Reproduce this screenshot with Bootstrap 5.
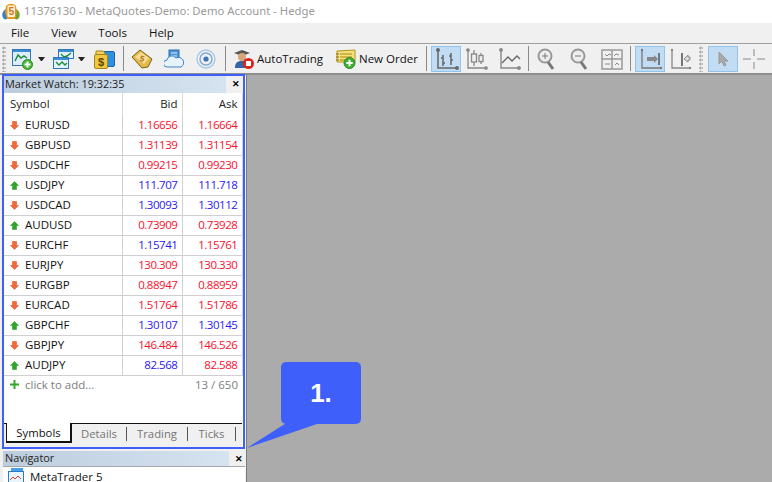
<!DOCTYPE html>
<html lang="en"><head><meta charset="utf-8"><title>MetaTrader 5</title>
<link rel="stylesheet" href="https://cdn.jsdelivr.net/npm/bootstrap@5.3.0/dist/css/bootstrap.min.css">
<style>
html,body{width:772px;height:482px;overflow:hidden;background:#fff}
body{font-family:"Open Sans","Noto Sans",sans-serif;font-size:12px;color:#111;position:relative}
.titlebar{height:23px;padding-left:2px;gap:4px;background:#fff;color:#9a9a9a;font-size:11.3px;font-family:"Noto Sans","Open Sans",sans-serif}
.menubar{height:20px;background:#f0f0f0;padding-left:11px;font-size:11.5px;color:#111}
.menubar span{margin-right:22px}
.toolbar{height:32px;background:#f0f0f0;border-top:1px solid #a0a0a0;border-bottom:2px solid #8e8e8e;flex:none}
.grip{width:4px;height:26px;margin-left:2px;background-image:radial-gradient(#a8a8a8 1px,transparent 1.2px);background-size:3px 4px;flex:none}
.tbtn{flex:none;display:flex;align-items:center;justify-content:center;height:26px}
.tsep{width:1px;height:25px;background:#8a8a8a;flex:none}
.act{background:#c1dcf3;outline:1px solid #90c4ed;outline-offset:-1px;width:30px}
.caret{width:7px;height:0;border-left:3.5px solid transparent;border-right:3.5px solid transparent;border-top:4px solid #222;flex:none}
.tlabel{font-size:11.5px;color:#111;flex:none;white-space:nowrap}
.lw1{width:66px}.lw2{width:57px}
.g2{margin-left:2px}.g3{margin-left:3px}.g4{margin-left:4px}.g5{margin-left:5px}.g6{margin-left:6px}.g7{margin-left:7px}.g8{margin-left:8px}.g9{margin-left:9px}.g10{margin-left:10px}.g11{margin-left:11px}.g12{margin-left:12px}
.w22{width:22px}
.workspace{height:407px;background:#ababab}
.leftcol{width:247px;background:#f0f0f0;border-right:1px solid #7b7b7b;flex:none}
.watch{margin:-1px 1px 0 2px;height:375px;flex:none;border:2px solid #3f5ffb;background:#fff;position:relative;z-index:1}
.panelhead{height:17px;flex:none;background:linear-gradient(90deg,#bccddd,#d8e5f2);font-size:10.9px;line-height:16px;padding-left:1px;color:#222}
.panelclose{width:17px;background:#f0f0f0;font-size:9px;font-weight:700;padding-left:6px;line-height:15px;color:#000;margin-left:auto}
.panelhead2{height:15px;line-height:14px;margin-left:3px;padding-left:2px}
.qtable{width:238px;border-collapse:collapse;table-layout:fixed;margin:0;font-family:"Open Sans",sans-serif;font-size:11.5px}
.qtable th{font-weight:400;height:22px;padding:0 4px 0 6px;border-right:1px solid #d9d9d9;color:#222}
.qtable td{height:20px;padding:0 4px 0 6px;border-right:1px solid #d0d0d0;border-bottom:1px solid #d0d0d0;line-height:1;white-space:nowrap}
.qtable .colsym{width:118px}.qtable .colnum{width:60px}
.num{text-align:right;letter-spacing:-.45px}
.up{color:#2a18f5}.dn{color:#f8102e}
.arrow{display:inline-block;vertical-align:-1px;margin-right:6px}
.addrow{height:20px;margin-top:-1px;flex:none;padding:0 4px 0 6px;color:#7d7d7d;font-size:11.5px;width:238px}
.tabs{height:24px;margin-top:auto;width:238px;padding-left:2px;font-size:11.3px;color:#757575;background:#f0f0f0;border-top:1px solid #111}
.tab1{width:66px;height:20px;background:#fff;border-style:solid;border-color:#111;border-width:0 2px 2px 1px;color:#111;text-align:center;line-height:18px;margin-top:-1px;padding-top:1px}
.tabx{border-right:1px solid #555;height:14px;display:flex;align-items:center;justify-content:center;margin-top:3px}
.t2{width:55px}.t3{width:61px}.t4{width:48px}
.nav2{margin-top:2px}
.navbody{background:#fff;height:20px;margin:0 1px 0 3px;border-top:1px solid #a8a8a8;font-size:11.5px;padding:1px 0 0 5px;gap:6px;line-height:17px;white-space:nowrap}
.callout{position:absolute;left:246px;top:362px;width:116px;height:90px;z-index:3;pointer-events:none}
.calloutbox{position:absolute;left:35px;top:0;width:80px;height:62px;background:#3f5ffb;border-radius:5px;color:#fff;font-family:"Liberation Sans",sans-serif;font-weight:700;font-size:26px;display:flex;align-items:center;justify-content:center}
.calloutsvg{position:absolute;left:0;top:0}
</style></head><body>
<div class="titlebar d-flex align-items-center">
<svg width="18" height="18" viewBox="0 0 18 18"><path d="M4 6C0 8-1 13 2 16c2 1 3 0 4-1Z" fill="#3c7fc0"/><path d="M14 6c4 2 5 7 2 10-2 1-3 0-4-1Z" fill="#6fa32e"/><path d="M4 3c3-3 7-3 10 0l1 6-2 7H5L3 9Z" fill="#e39a22"/><rect x="5.500" y="2.500" width="7.500" height="11.500" rx="1" fill="#fbf1d8"/><text x="9.300" y="12.300" font-size="10.500" font-weight="700" text-anchor="middle" fill="#d8761c" font-family="Liberation Sans">5</text></svg>
<span>11376130 - MetaQuotes-Demo: Demo Account - Hedge</span></div>
<div class="menubar d-flex align-items-center"><span>File</span><span>View</span><span>Tools</span><span>Help</span></div>
<div class="toolbar d-flex align-items-center">
<div class="grip"></div>
<div class="tbtn w22 g6"><svg width="22" height="22" viewBox="0 0 22 22"><rect x=".5" y="1.500" width="18" height="16" fill="#dceefc" stroke="#2e77b8"/><rect x="1" y="2" width="17" height="2" fill="#3b8ed4"/><path d="M3 13l3-6 3 3 3-2 3 2" fill="none" stroke="#1f8a3b" stroke-width="1.500"/><circle cx="15.500" cy="16.500" r="5" fill="#4bb43a" stroke="#2d8a24"/><path d="M15.500 13.500v6M12.500 16.500h6" stroke="#fff" stroke-width="2"/></svg></div>
<div class="caret g4"></div>
<div class="tbtn w22 g8"><svg width="22" height="22" viewBox="0 0 22 22"><rect x="5.500" y="1.500" width="15" height="9" fill="#e4f2fc" stroke="#2e77b8"/><rect x="6" y="2" width="14" height="2" fill="#3b8ed4"/><path d="M8 6l3 3 3-1 4-3" fill="none" stroke="#1f8a3b" stroke-width="1.400"/><rect x=".5" y="9.500" width="15" height="11" fill="#e4f2fc" stroke="#2e77b8"/><rect x="1" y="10" width="14" height="2" fill="#3b8ed4"/><path d="M3 14l3 3 3-3 3 3 2-2" fill="none" stroke="#1f8a3b" stroke-width="1.400"/></svg></div>
<div class="caret g3"></div>
<div class="tbtn w22 g9"><svg width="22" height="22" viewBox="0 0 22 22"><rect x="8.500" y="3.500" width="12" height="15" rx="1.500" fill="#2f8fe0" stroke="#1f65a8"/><path d="M2 3h7l2 2v3H2Z" fill="#f4d15a" stroke="#a8851c"/><rect x=".5" y="6.500" width="13" height="14" rx="1.500" fill="#f1c83d" stroke="#a8851c"/><text x="7" y="17.500" font-size="11" font-weight="700" text-anchor="middle" fill="#5a4300" font-family="Liberation Sans">$</text></svg></div>
<div class="tsep g7"></div>
<div class="tbtn w22 g7"><svg width="22" height="20" viewBox="0 0 22 20"><path d="M1 8L9 1l12 9-4 8-6 1Z" fill="#e2b94a" stroke="#7d5f14"/><path d="M4 8l6-5 8 6-5 6Z" fill="#f5dc90"/><text x="11" y="12.500" font-size="8" font-weight="700" text-anchor="middle" fill="#a8741a" font-family="Liberation Sans" transform="rotate(15 11 10)">5</text></svg></div>
<div class="tbtn w22 g10"><svg width="20" height="20" viewBox="0 0 20 20"><rect x="5" y="1" width="10" height="12" fill="#4e94d9" stroke="#2c6ca8"/><path d="M7 4h6M7 7h6" stroke="#d8ecff"/><path d="M3 18a3.500 3.500 0 0 1 0-7 5 5 0 0 1 9-2 4.500 4.500 0 0 1 5 9Z" fill="#e6f2fc" stroke="#3d85c6"/></svg></div>
<div class="tbtn w22 g10"><svg width="20" height="20" viewBox="0 0 20 20" fill="none"><circle cx="10" cy="10" r="9" stroke="#a9c8e8" stroke-width="1.400"/><circle cx="10" cy="10" r="6" stroke="#7da9d6" stroke-width="1.400"/><circle cx="10" cy="10" r="2.600" fill="#3b74b8"/></svg></div>
<div class="tsep g8"></div>
<div class="tbtn w22 g7"><svg width="22" height="22" viewBox="0 0 22 22"><path d="M1 5l8-3 8 3-8 3Z" fill="#555"/><circle cx="9" cy="9" r="4" fill="#d8a57a"/><path d="M2 20c0-6 3-7 7-7s7 1 7 7Z" fill="#3564a8"/><circle cx="15.500" cy="15.500" r="5.500" fill="#d9251a"/><rect x="13" y="13" width="5" height="5" fill="#fff"/></svg></div>
<span class="tlabel lw1 g2">AutoTrading</span>
<div class="tbtn w22 g12"><svg width="22" height="20" viewBox="0 0 22 20"><path d="M2 2l18-1v12H2Z" fill="#f6e07a" stroke="#b4931f"/><path d="M1 5h3M1 8h3M1 11h3" stroke="#8a6d10"/><path d="M5 5h12M5 8h12M5 11h7" stroke="#a88518"/><circle cx="14.500" cy="14" r="5.500" fill="#41ac32" stroke="#2c8c22"/><path d="M14.500 10.800v6.400M11.300 14h6.400" stroke="#fff" stroke-width="2"/></svg></div>
<span class="tlabel lw2 g2">New Order</span>
<div class="tsep g10"></div>
<div class="tbtn act g4"><svg width="26" height="24" viewBox="0 0 26 24" fill="none" stroke="#666" stroke-width="1.500"><path d="M5 2v19h20"/><path d="M10 8v11M8 11h2M10 16h2M18 6v12M16 9h2M18 13h2"/><circle cx="5" cy="3" r="1.200" fill="#666"/><circle cx="24" cy="21" r="1.200" fill="#666"/></svg></div>
<div class="tbtn w22 g5"><svg width="22" height="24" viewBox="0 0 22 24" fill="none" stroke="#888" stroke-width="1.300"><path d="M2 2v19h19"/><path d="M8 3v16M15 6v11"/><rect x="5.500" y="7" width="5" height="8" fill="#eee"/><rect x="13" y="8.500" width="4" height="6" fill="#eee"/><circle cx="2" cy="3" r="1.200" fill="#888"/><circle cx="20" cy="21" r="1.200" fill="#888"/></svg></div>
<div class="tbtn w22 g11"><svg width="22" height="24" viewBox="0 0 22 24" fill="none" stroke="#888" stroke-width="1.400"><path d="M2 2v19h19"/><path d="M3 16l6-6 4 4 5-5 3 3" stroke="#666"/><circle cx="2" cy="3" r="1.200" fill="#888"/><circle cx="20" cy="21" r="1.200" fill="#888"/></svg></div>
<div class="tsep g7"></div>
<div class="tbtn w22 g6"><svg width="22" height="22" viewBox="0 0 22 22" fill="none"><circle cx="10" cy="8" r="6.500" fill="#eee" stroke="#999" stroke-width="2"/><path d="M7 8h6M10 5v6" stroke="#777"/><path d="M13 14l5 7" stroke="#777" stroke-width="3"/></svg></div>
<div class="tbtn w22 g11"><svg width="22" height="22" viewBox="0 0 22 22" fill="none"><circle cx="10" cy="8" r="6.500" fill="#eee" stroke="#999" stroke-width="2"/><path d="M7 8h6" stroke="#777"/><path d="M13 14l5 7" stroke="#777" stroke-width="3"/></svg></div>
<div class="tbtn w22 g11"><svg width="22" height="22" viewBox="0 0 22 22" fill="none" stroke="#999"><rect x="1" y="2" width="20" height="19" stroke-width="1.500"/><path d="M11 2v19M1 11h20" stroke-width="1.500"/><path d="M4 6l2 2 2-2 2 1M13 8l2-2 3 1M4 16h5M14 17l2-2 2 2" stroke="#888"/></svg></div>
<div class="tsep g7"></div>
<div class="tbtn act g4"><svg width="26" height="24" viewBox="0 0 26 24" fill="none"><path d="M5 3v18h20" stroke="#777" stroke-width="1.300"/><circle cx="5" cy="3" r="1.200" fill="#777"/><circle cx="24" cy="21" r="1.200" fill="#777"/><path d="M22 6v12" stroke="#444" stroke-width="1.300"/><path d="M10 10h7V8l4 4-4 4v-2h-7Z" fill="#888"/></svg></div>
<div class="tbtn w22 g5"><svg width="22" height="24" viewBox="0 0 22 24" fill="none"><path d="M2 3v18h19" stroke="#888" stroke-width="1.300"/><circle cx="2" cy="3" r="1.200" fill="#888"/><circle cx="20" cy="21" r="1.200" fill="#888"/><path d="M12 6v13" stroke="#333" stroke-width="1.300"/><path d="M20 10h-2V8l-4 4 4 3v-2h2Z" fill="#ddd" stroke="#888"/></svg></div>
<div class="grip g7"></div>
<div class="tbtn act g5"><svg width="12" height="16" viewBox="0 0 12 16"><path d="M2 1v12l3-3 2 5 2-1-2-4h4Z" fill="#aaa" stroke="#999"/></svg></div>
<div class="tbtn w22 g5"><svg width="22" height="22" viewBox="0 0 22 22" stroke="#aaa" stroke-width="1.500"><path d="M11 1v7M11 14v7M0 11h8M14 11h8"/></svg></div>
</div>
<div class="workspace d-flex">
<div class="leftcol d-flex flex-column">
<div class="watch d-flex flex-column">
<div class="panelhead d-flex"><span>Market Watch: 19:32:35</span><span class="panelclose">✕</span></div>
<table class="qtable"><thead><tr><th class="colsym">Symbol</th><th class="colnum text-end">Bid</th><th class="colnum text-end">Ask</th></tr></thead><tbody id="rows"></tbody></table>
<div class="addrow d-flex align-items-center"><svg width="9" height="9" viewBox="0 0 9 9" class="arrow"><path d="M4.500 0v9M0 4.500h9" stroke="#34a828" stroke-width="2"/></svg><span>click to add...</span><span class="ms-auto">13 / 650</span></div>
<div class="tabs d-flex"><div class="tab1">Symbols</div><div class="tabx t2">Details</div><div class="tabx t3">Trading</div><div class="tabx t4">Ticks</div></div>
</div>
<div class="nav2">
<div class="panelhead panelhead2 d-flex"><span>Navigator</span><span class="panelclose">✕</span></div>
<div class="navbody d-flex align-items-start"><svg width="16" height="15" viewBox="0 0 16 15"><rect x="3" y="0" width="12" height="10" fill="#4aa0e6"/><rect x="0.500" y="3.500" width="15" height="12" fill="#eaf4fc" stroke="#2c7cc4"/><path d="M2 12l3-3 2 2 3-3 3 3" stroke="#d9453a" fill="none"/></svg><span>MetaTrader 5</span></div>
</div>
</div>
</div>
<div class="callout"><svg class="calloutsvg" width="116" height="90"><path d="M1 86L42 60H71V62Z" fill="#3f5ffb"/></svg><div class="calloutbox">1.</div></div>
<script>
var d=[["EURUSD",0,"1.16656",0,"1.16664",0],["GBPUSD",0,"1.31139",0,"1.31154",0],["USDCHF",0,"0.99215",0,"0.99230",0],["USDJPY",1,"111.707",1,"111.718",1],["USDCAD",0,"1.30093",1,"1.30112",1],["AUDUSD",1,"0.73909",0,"0.73928",0],["EURCHF",0,"1.15741",1,"1.15761",0],["EURJPY",0,"130.309",0,"130.330",0],["EURGBP",0,"0.88947",0,"0.88959",0],["EURCAD",0,"1.51764",0,"1.51786",0],["GBPCHF",1,"1.30107",1,"1.30145",1],["GBPJPY",0,"146.484",0,"146.526",0],["AUDJPY",1,"82.568",1,"82.588",0]];
document.getElementById("rows").innerHTML=d.map(function(r){
var a=r[1]?'<path d="M4.500 0.500l4 4H6.500V8.500h-4V4.500H.5Z" fill="#2fa32a" stroke="#2fa32a" stroke-width=".6" stroke-linejoin="round"/>':'<path d="M2.500 .5h4v4h2l-4 4-4-4h2Z" fill="#ef6a3a" stroke="#e8542a" stroke-width=".6" stroke-linejoin="round"/>';
return '<tr><td><svg class="arrow" width="9" height="9" viewBox="0 0 9 9">'+a+'</svg>'+r[0]+'</td><td class="num '+(r[3]?'up':'dn')+'">'+r[2]+'</td><td class="num '+(r[5]?'up':'dn')+'">'+r[4]+'</td></tr>';
}).join("");
</script>
<script src="https://cdn.jsdelivr.net/npm/bootstrap@5.3.0/dist/js/bootstrap.bundle.min.js"></script>
</body></html>
